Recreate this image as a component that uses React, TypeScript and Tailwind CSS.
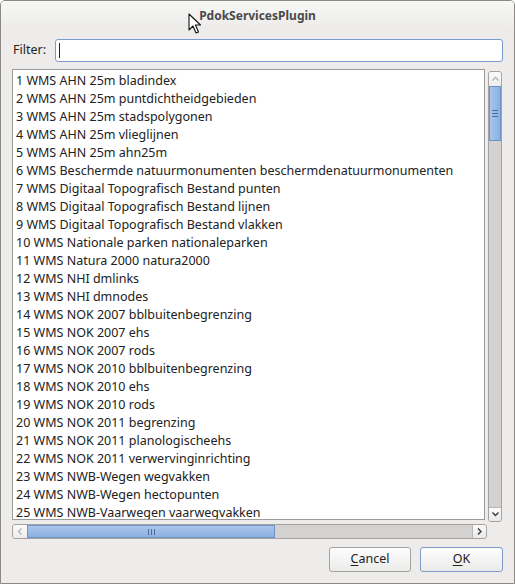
const ITEMS = [
  "1 WMS AHN 25m bladindex",
  "2 WMS AHN 25m puntdichtheidgebieden",
  "3 WMS AHN 25m stadspolygonen",
  "4 WMS AHN 25m vlieglijnen",
  "5 WMS AHN 25m ahn25m",
  "6 WMS Beschermde natuurmonumenten beschermdenatuurmonumenten",
  "7 WMS Digitaal Topografisch Bestand punten",
  "8 WMS Digitaal Topografisch Bestand lijnen",
  "9 WMS Digitaal Topografisch Bestand vlakken",
  "10 WMS Nationale parken nationaleparken",
  "11 WMS Natura 2000 natura2000",
  "12 WMS NHI dmlinks",
  "13 WMS NHI dmnodes",
  "14 WMS NOK 2007 bblbuitenbegrenzing",
  "15 WMS NOK 2007 ehs",
  "16 WMS NOK 2007 rods",
  "17 WMS NOK 2010 bblbuitenbegrenzing",
  "18 WMS NOK 2010 ehs",
  "19 WMS NOK 2010 rods",
  "20 WMS NOK 2011 begrenzing",
  "21 WMS NOK 2011 planologischeehs",
  "22 WMS NOK 2011 verwervinginrichting",
  "23 WMS NWB-Wegen wegvakken",
  "24 WMS NWB-Wegen hectopunten",
  "25 WMS NWB-Vaarwegen vaarwegvakken",
];

const Chevron = ({ dir, light }: { dir: "up" | "down" | "left" | "right"; light?: boolean }) => {
  const d = {
    up: "M1.5 5.5 L4.5 2.5 L7.5 5.5",
    down: "M1.5 2.5 L4.5 5.5 L7.5 2.5",
    left: "M5.5 1.5 L2.5 4.5 L5.5 7.5",
    right: "M3 1.5 L6 4.5 L3 7.5",
  }[dir];
  return (
    <svg width="9" height="9" viewBox="0 0 9 9">
      <path d={d} fill="none" stroke={light ? "#b4b4b4" : "#3a3a3a"} strokeWidth="1.4" />
    </svg>
  );
};

const Cursor = () => (
  <svg width="14" height="22" viewBox="0 0 14 22" className="absolute left-[187px] top-[12px]">
    <path
      d="M1 1 L1 17 L5 13 L8 20 L10.5 19 L7.5 12 L12.5 12 Z"
      fill="#fff"
      stroke="#111"
      strokeWidth="1.1"
      strokeLinejoin="round"
    />
  </svg>
);

export default function App() {
  return (
    <div
      className="relative flex h-[584px] w-[515px] flex-col overflow-hidden rounded-t-[5px] border border-[#8a8986] bg-[#edeceb] text-[#222]"
      style={{ fontFamily: '"Noto Sans", "Open Sans", sans-serif' }}
    >
      <div className="flex h-[28px] shrink-0 items-center justify-center bg-gradient-to-b from-[#f7f7f6] to-[#edeceb] pt-[1px] text-[12px] font-bold text-[#4a4a4a]">
        PdokServicesPlugin
      </div>
      <Cursor />

      <div className="flex flex-col px-[11px]">
        <div className="mt-[10px] flex items-center">
          <span className="w-[43px] pl-[1px] text-[12.5px]">Filter:</span>
          <div className="flex h-[23px] flex-1 items-center rounded-[3px] border border-[#7a9bd0] bg-white pl-[3px]">
            <div className="h-[15px] w-px bg-[#222]" />
          </div>
        </div>

        <div className="mt-[7px] flex">
          <div className="h-[451px] w-[473px] overflow-hidden border border-[#9b9b9a] bg-white pl-[3px] pt-[2px]">
            {ITEMS.map((t) => (
              <div key={t} className="h-[18px] whitespace-nowrap text-[12.5px] leading-[18px]">
                {t}
              </div>
            ))}
          </div>
          <div className="ml-[3px] mt-[2px] flex h-[451px] w-[14px] flex-col overflow-hidden rounded-[3px] border border-[#a4a3a1] bg-[#d3d2d0]">
            <div className="flex h-[14px] shrink-0 items-center justify-center bg-gradient-to-b from-[#fbfbfb] to-[#ececec]">
              <Chevron dir="up" light />
            </div>
            <div className="flex h-[55px] shrink-0 flex-col items-center justify-center gap-[2px] border border-[#6d93c9] bg-gradient-to-r from-[#a9c6ec] to-[#8cb0df]">
              <div className="h-px w-[6px] bg-[#4c6d9c]" />
              <div className="h-px w-[6px] bg-[#4c6d9c]" />
              <div className="h-px w-[6px] bg-[#4c6d9c]" />
            </div>
            <div className="flex-1" />
            <div className="flex h-[14px] shrink-0 items-center justify-center border-t border-[#b8b7b5] bg-gradient-to-b from-[#fbfbfb] to-[#e9e9e9]">
              <Chevron dir="down" />
            </div>
          </div>
        </div>

        <div className="mt-[2px] flex h-[15px] w-[475px] overflow-hidden rounded-[3px] border border-[#a4a3a1] bg-[#d3d2d0]">
          <div className="flex w-[14px] shrink-0 items-center justify-center bg-gradient-to-b from-[#fbfbfb] to-[#ececec]">
            <Chevron dir="left" light />
          </div>
          <div className="flex w-[248px] shrink-0 items-center justify-center gap-[2px] border border-[#6d93c9] bg-gradient-to-b from-[#a9c6ec] to-[#8cb0df]">
            <div className="h-[6px] w-px bg-[#4c6d9c]" />
            <div className="h-[6px] w-px bg-[#4c6d9c]" />
            <div className="h-[6px] w-px bg-[#4c6d9c]" />
          </div>
          <div className="flex-1" />
          <div className="flex w-[14px] shrink-0 items-center justify-center border-l border-[#b8b7b5] bg-gradient-to-b from-[#fbfbfb] to-[#e9e9e9]">
            <Chevron dir="right" />
          </div>
        </div>

        <div className="mt-[8px] flex justify-end gap-[9px]">
          <button className="flex h-[25px] w-[82px] items-center justify-center rounded-[3px] border border-[#a3a2a0] bg-gradient-to-b from-[#fdfdfd] to-[#ebebea] text-[12.5px]">
            <span>
              <span className="underline underline-offset-2">C</span>ancel
            </span>
          </button>
          <button className="flex h-[25px] w-[83px] items-center justify-center rounded-[3px] border border-[#7f9cc8] bg-gradient-to-b from-[#fdfdfd] to-[#ebebea] text-[12.5px]">
            <span>
              <span className="underline underline-offset-2">O</span>K
            </span>
          </button>
        </div>
      </div>
    </div>
  );
}
